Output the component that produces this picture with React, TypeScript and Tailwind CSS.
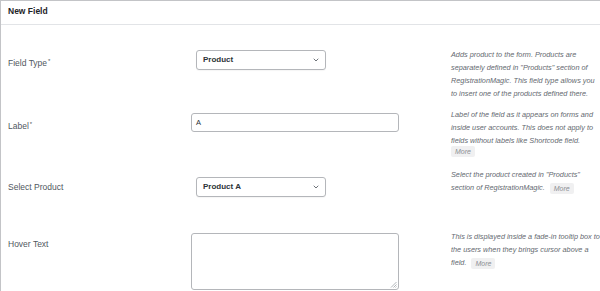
import { ChevronDown } from "lucide-react";

const font = { fontFamily: '"Liberation Sans", Arial, sans-serif' };

function More() {
  return (
    <span className="ml-[5px] inline-block rounded-[2px] bg-[#f0f0f1] px-[4px] py-[1px] align-middle text-[7px] leading-[9px] text-[#8c8f94]">
      More
    </span>
  );
}

function Label({ text, required, top }: { text: string; required?: boolean; top: string }) {
  return (
    <div className={`${top} pl-[7px] text-[8.5px] leading-[12px] text-[#50575e]`}>
      {text}
      {required && <sup className="ml-[1px] text-[6px]">*</sup>}
    </div>
  );
}

function Select({ value }: { value: string }) {
  return (
    <div className="ml-[6px] flex h-[20px] w-[130px] items-center justify-between rounded-[3px] border border-[#b4b6ba] bg-white pl-[6px] pr-[5px] shadow-[0_1px_1px_rgba(0,0,0,0.04)]">
      <span className="text-[8px] font-bold text-[#2c3338]">{value}</span>
      <ChevronDown size={8} strokeWidth={2.5} className="text-[#50575e]" />
    </div>
  );
}

// description with the "More" chip on the last line
function Desc({ lines, top, more }: { lines: string[]; top: string; more?: boolean }) {
  return (
    <div className={`${top} pr-[2px] text-[7.3px] italic leading-[13px] text-[#646970]`}>
      {lines.map((line, i) => (
        <div key={i} className="whitespace-nowrap">
          {line}
          {more && i === lines.length - 1 && <More />}
        </div>
      ))}
    </div>
  );
}

export default function App() {
  return (
    <div style={font} className="h-[291px] w-[600px] overflow-hidden border-l border-t border-[#c3c4c7] bg-white">
      <div className="flex h-[24px] items-start border-b border-[#e2e4e7] pl-[7px] pt-[4px]">
        <span className="text-[8.5px] font-bold text-[#1d2327]">New Field</span>
      </div>

      <div className="grid h-[78px] grid-cols-[189px_261px_1fr]">
        <Label text="Field Type" required top="mt-[32px]" />
        <div className="mt-[25px]">
          <Select value="Product" />
        </div>
        <Desc
          top="mt-[23px]"
          lines={[
            "Adds product to the form. Products are",
            'separately defined in "Products" section of',
            "RegistrationMagic. This field type allows you",
            "to insert one of the products defined there.",
          ]}
        />
      </div>

      <div className="grid h-[62px] grid-cols-[189px_261px_1fr]">
        <Label text="Label" required top="mt-[17px]" />
        <div className="mt-[10px]">
          <div className="ml-[1px] flex h-[19px] w-[208px] items-center rounded-[3px] border border-[#b4b6ba] pl-[4px] text-[7.5px] text-[#2c3338]">
            A
          </div>
        </div>
        <div className="mt-[5px]">
          <Desc
            top="mt-0"
            lines={[
              "Label of the field as it appears on forms and",
              "inside user accounts. This does not apply to",
              "fields without labels like Shortcode field.",
            ]}
          />
          <div className="-ml-[5px] mt-[-1px] text-[7.3px] italic">
            <More />
          </div>
        </div>
      </div>

      <div className="grid h-[57px] grid-cols-[189px_261px_1fr]">
        <Label text="Select Product" top="mt-[16px]" />
        <div className="mt-[12px]">
          <Select value="Product A" />
        </div>
        <Desc
          top="mt-[3px]"
          more
          lines={['Select the product created in "Products"', "section of RegistrationMagic."]}
        />
      </div>

      <div className="grid h-[70px] grid-cols-[189px_261px_1fr]">
        <Label text="Hover Text" top="mt-[16px]" />
        <div className="mt-[11px]">
          <div className="relative ml-[1px] h-[57px] w-[208px] rounded-[3px] border border-[#b4b6ba]">
            <svg className="absolute bottom-[1px] right-[1px]" width="7" height="7" viewBox="0 0 7 7">
              <path d="M6.5 1 L1 6.5 M6.5 3.5 L3.5 6.5 M6.5 5.5 L5.5 6.5" stroke="#a0a5aa" strokeWidth="0.8" />
            </svg>
          </div>
        </div>
        <Desc
          top="mt-[8px]"
          more
          lines={[
            "This is displayed inside a fade-in tooltip box to",
            "the users when they brings cursor above a",
            "field.",
          ]}
        />
      </div>
    </div>
  );
}
